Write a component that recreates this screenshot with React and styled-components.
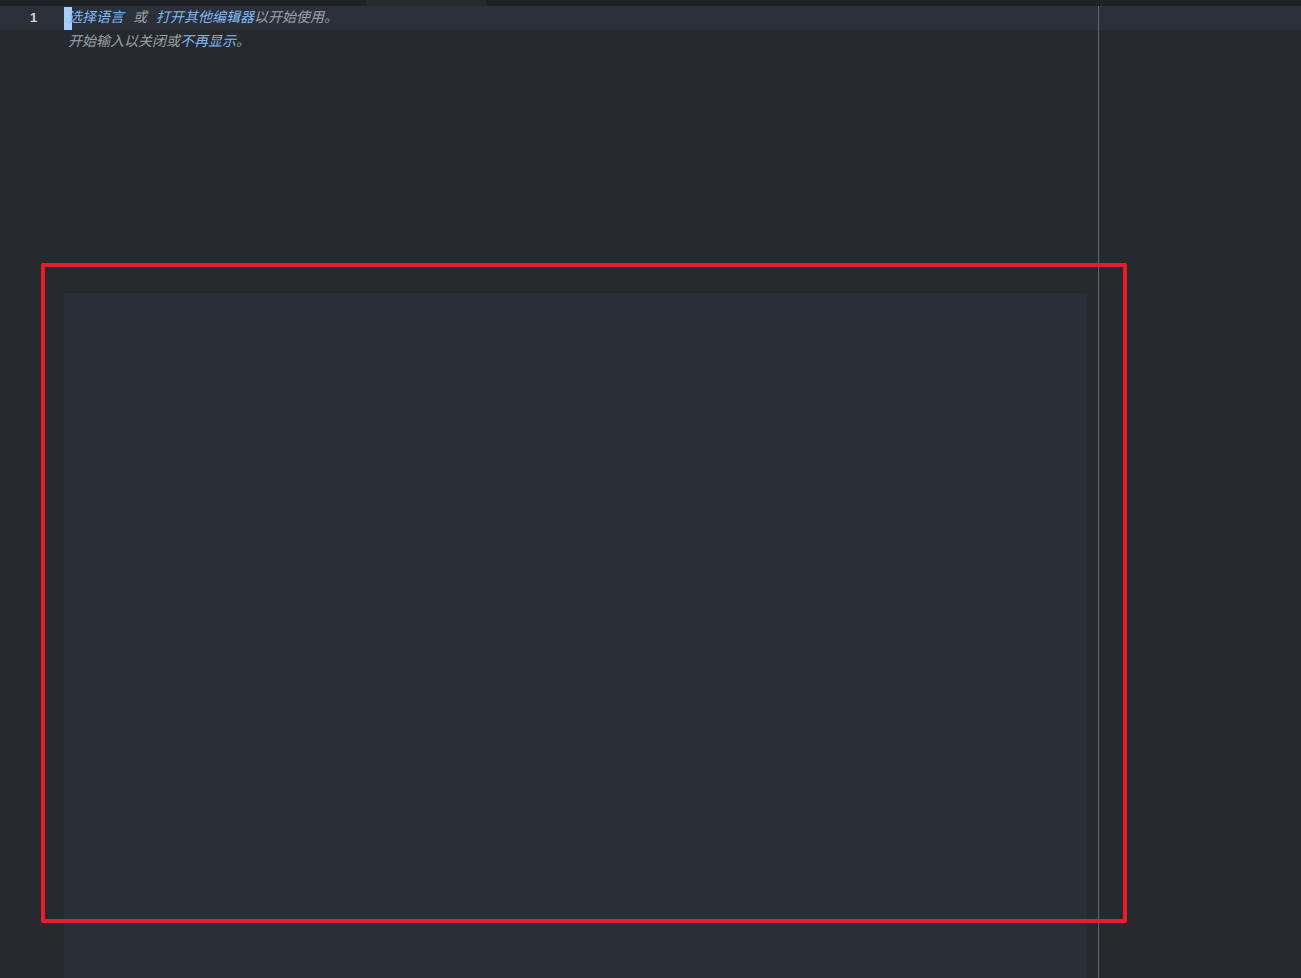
import React from 'react';
import styled, { createGlobalStyle } from 'styled-components';

const GlobalStyle = createGlobalStyle`
  html, body {
    margin: 0;
    padding: 0;
    background: #262a2e;
    overflow: hidden;
  }
  #root {
    height: 978px;
  }
`;

const Page = styled.div`
  position: relative;
  width: 1301px;
  height: 978px;
  background: #262a2e;
  display: flex;
  flex-direction: column;
  font-family: 'Noto Sans', 'Noto Sans CJK SC', sans-serif;
`;

const TabStrip = styled.div`
  height: 6px;
  flex-shrink: 0;
  display: flex;
  background: #1f2226;
`;

const Tab = styled.div`
  width: 120px;
  margin-left: 366px;
  background: #262a2e;
`;

const Editor = styled.div`
  position: relative;
  flex: 1;
  display: flex;
  flex-direction: column;
`;

const Line = styled.div`
  display: flex;
  align-items: center;
  height: 24px;
  padding-bottom: 4px;
  box-sizing: border-box;
  background: ${({ $current }) => ($current ? '#2c3038' : 'transparent')};
`;

const Gutter = styled.div`
  width: 64px;
  flex-shrink: 0;
  padding-left: 30px;
  padding-top: 2px;
  box-sizing: border-box;
  color: #d4d6d8;
  font-family: 'Liberation Sans', sans-serif;
  font-size: 13px;
  font-weight: bold;
`;

const Cursor = styled.span`
  display: inline-block;
  width: 8px;
  height: 23px;
  margin-top: 4px;
  background: #a6cdfa;
  margin-right: -4px;
`;

const Hint = styled.div`
  display: flex;
  align-items: center;
  font-size: 14px;
  font-style: italic;
  color: #9aa1a8;
  font-family: 'Noto Sans CJK SC', sans-serif;
  padding-left: ${({ $indent }) => $indent || 0}px;
`;

const Link = styled.span`
  color: #80b8f2;
`;

const Sep = styled.span`
  margin: 0 9px;
`;

const Ruler = styled.div`
  position: absolute;
  left: 1098px;
  top: 0;
  bottom: 0;
  width: 1px;
  background: #62666b;
`;

const Body = styled.div`
  flex: 1;
  display: flex;
  flex-direction: column;
  padding-left: 64px;
  padding-top: 239px;
`;

const Panel = styled.div`
  flex: 1;
  width: 1023px;
  background: #2a2e36;
`;

const Highlight = styled.div`
  position: absolute;
  left: 41px;
  top: 263px;
  width: 1086px;
  height: 660px;
  box-sizing: border-box;
  border: 4px solid #ec1c27;
  border-radius: 2px;
  pointer-events: none;
`;

export default function App() {
  return (
    <>
      <GlobalStyle />
      <Page>
        <TabStrip>
          <Tab />
        </TabStrip>
        <Editor>
          <Ruler />
          <Line $current>
            <Gutter>1</Gutter>
            <Hint>
              <Cursor />
              <Link>选择语言</Link>
              <Sep>或</Sep>
              <Link>打开其他编辑器</Link>
              <span>以开始使用。</span>
            </Hint>
          </Line>
          <Line>
            <Gutter />
            <Hint $indent={4}>
              <span>开始输入以关闭或</span>
              <Link>不再显示</Link>
              <span>。</span>
            </Hint>
          </Line>
          <Body>
            <Panel />
          </Body>
        </Editor>
        <Highlight />
      </Page>
    </>
  );
}
